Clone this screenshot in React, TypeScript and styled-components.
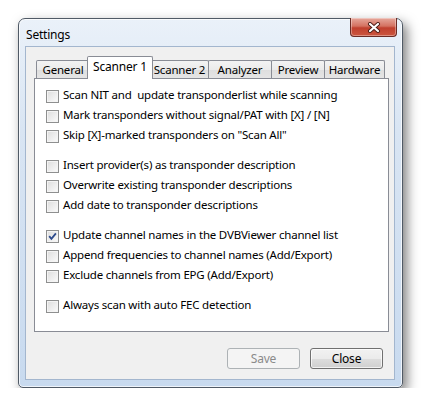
import React from 'react';
import styled, { createGlobalStyle } from 'styled-components';

const GlobalStyle = createGlobalStyle`
  html, body {
    margin: 0;
    padding: 0;
    background: #ffffff;
  }
  body {
    font-family: 'Noto Sans', 'Open Sans', sans-serif;
    font-size: 11.5px;
    letter-spacing: -0.2px;
    color: #000000;
  }
`;

const Desktop = styled.div`
  padding: 18px 0 0 18px;
`;

const Window = styled.div`
  box-sizing: border-box;
  width: 385px;
  height: 370px;
  display: flex;
  flex-direction: column;
  padding: 0 7px 7px 6px;
  border: 1px solid #505a66;
  border-radius: 7px 7px 5px 5px;
  background: linear-gradient(180deg, #eaf1f9 0%, #d9e5f3 30%, #c8daef 100%);
  box-shadow: inset 0 0 0 1px rgba(255, 255, 255, 0.7), 4px 5px 12px rgba(0, 0, 0, 0.5);
`;

const TitleBar = styled.div`
  height: 27px;
  display: flex;
  align-items: flex-start;
`;

const Title = styled.span`
  margin: 7px 0 0 1px;
  font-size: 12px;
  letter-spacing: -0.2px;
  color: #000000;
`;

const CloseBox = styled.div`
  margin: -1px -2px 0 auto;
  width: 47px;
  height: 19px;
  box-sizing: border-box;
  display: flex;
  align-items: center;
  justify-content: center;
  border: 1px solid #6a2b25;
  border-top: none;
  border-radius: 0 0 4px 4px;
  background: linear-gradient(180deg, #e6a89c 0%, #d47261 45%, #c0402e 55%, #cc563f 100%);
  box-shadow: inset 0 0 0 1px rgba(255, 255, 255, 0.35);
`;

const Client = styled.div`
  flex: 1;
  box-sizing: border-box;
  display: flex;
  flex-direction: column;
  padding: 9px 5px 0 8px;
  border: 1px solid #a3b6ce;
  background: #f0f0f0;
`;

const TabStrip = styled.div`
  height: 22px;
  display: flex;
  align-items: flex-end;
  padding-left: 2px;
`;

const Tab = styled.div<{ $w: number; $active?: boolean }>`
  box-sizing: border-box;
  flex-shrink: 0;
  width: ${p => (p.$active ? p.$w + 4 : p.$w)}px;
  height: ${p => (p.$active ? 23 : 18)}px;
  display: flex;
  align-items: center;
  justify-content: center;
  padding-bottom: ${p => (p.$active ? 3 : 0)}px;
  margin-left: ${p => (p.$active ? -3 : -1)}px;
  margin-right: ${p => (p.$active ? -2 : 0)}px;
  margin-bottom: ${p => (p.$active ? -1 : 0)}px;
  position: relative;
  z-index: ${p => (p.$active ? 2 : 1)};
  border: 1px solid #898c95;
  border-bottom: none;
  border-radius: 2px 2px 0 0;
  background: ${p =>
    p.$active ? '#ffffff' : 'linear-gradient(180deg, #f3f3f3 0%, #ebebeb 50%, #dedede 51%, #e5e5e5 100%)'};
  font-size: ${p => (p.$active ? 12 : 11.5)}px;
  white-space: nowrap;

  &:first-child {
    margin-left: 0;
  }
`;

const Panel = styled.div`
  box-sizing: border-box;
  height: 254px;
  position: relative;
  z-index: 1;
  padding: 7px 0 0 11px;
  border: 1px solid #898c95;
  background: #ffffff;
  display: flex;
  flex-direction: column;
  gap: 10px;
`;

const Group = styled.div`
  display: flex;
  flex-direction: column;
`;

const Row = styled.label`
  height: 20px;
  display: flex;
  align-items: flex-start;
  gap: 4px;
`;

const Label = styled.span`
  line-height: 18px;
  white-space: pre;
`;

const Box = styled.span`
  box-sizing: border-box;
  width: 13px;
  height: 13px;
  margin-top: 4px;
  flex-shrink: 0;
  position: relative;
  border: 1px solid #8e8f8f;
  background: linear-gradient(135deg, #dcdcdc 0%, #efefef 60%, #fbfbfb 100%);
  box-shadow: inset 0 0 0 1px #f4f4f4;

  svg {
    position: absolute;
    left: -1px;
    top: -1px;
  }
`;

const ButtonRow = styled.div`
  margin-top: 16px;
  padding-right: 6px;
  display: flex;
  justify-content: flex-end;
  gap: 10px;
`;

const Button = styled.button<{ $disabled?: boolean }>`
  box-sizing: border-box;
  width: 73px;
  height: 21px;
  padding: 0;
  font-family: 'Noto Sans', 'Open Sans', sans-serif;
  font-size: 12px;
  letter-spacing: -0.2px;
  border-radius: 3px;
  border: 1px solid ${p => (p.$disabled ? '#adb2b5' : '#707070')};
  color: ${p => (p.$disabled ? '#8a8a8a' : '#000000')};
  background: ${p =>
    p.$disabled ? '#f4f4f4' : 'linear-gradient(180deg, #f2f2f2 0%, #ebebeb 50%, #dddddd 51%, #cfcfcf 100%)'};
  box-shadow: ${p => (p.$disabled ? 'none' : 'inset 0 0 0 1px rgba(255, 255, 255, 0.7)')};
`;

const CheckMark = () => (
  <svg width="13" height="13" viewBox="0 0 13 13">
    <path d="M3.2 6.2 L5.4 8.8 L9.9 3.4" fill="none" stroke="#2c4a8c" strokeWidth="1.8" />
  </svg>
);

const CloseGlyph = () => (
  <svg width="14" height="11" viewBox="0 0 14 11">
    <path d="M3 2 L11 9 M11 2 L3 9" stroke="#4a1c16" strokeWidth="4" strokeLinecap="round" />
    <path d="M3 2 L11 9 M11 2 L3 9" stroke="#ffffff" strokeWidth="2.2" strokeLinecap="round" />
  </svg>
);

const Check: React.FC<{ label: string; checked?: boolean }> = ({ label, checked }) => (
  <Row>
    <Box>{checked && <CheckMark />}</Box>
    <Label>{label}</Label>
  </Row>
);

const tabs = [
  { name: 'General', w: 54 },
  { name: 'Scanner 1', w: 62, active: true },
  { name: 'Scanner 2', w: 59 },
  { name: 'Analyzer', w: 64 },
  { name: 'Preview', w: 54 },
  { name: 'Hardware', w: 61 },
];

const groups: { label: string; checked?: boolean }[][] = [
  [
    { label: 'Scan NIT and  update transponderlist while scanning' },
    { label: 'Mark transponders without signal/PAT with [X] / [N]' },
    { label: 'Skip [X]-marked transponders on "Scan All"' },
  ],
  [
    { label: 'Insert provider(s) as transponder description' },
    { label: 'Overwrite existing transponder descriptions' },
    { label: 'Add date to transponder descriptions' },
  ],
  [
    { label: 'Update channel names in the DVBViewer channel list', checked: true },
    { label: 'Append frequencies to channel names (Add/Export)' },
    { label: 'Exclude channels from EPG (Add/Export)' },
  ],
  [{ label: 'Always scan with auto FEC detection' }],
];

export default function App() {
  return (
    <Desktop>
      <GlobalStyle />
      <Window>
        <TitleBar>
          <Title>Settings</Title>
          <CloseBox>
            <CloseGlyph />
          </CloseBox>
        </TitleBar>
        <Client>
          <TabStrip>
            {tabs.map(t => (
              <Tab key={t.name} $w={t.w} $active={t.active}>
                {t.name}
              </Tab>
            ))}
          </TabStrip>
          <Panel>
            {groups.map((g, i) => (
              <Group key={i}>
                {g.map(item => (
                  <Check key={item.label} label={item.label} checked={item.checked} />
                ))}
              </Group>
            ))}
          </Panel>
          <ButtonRow>
            <Button $disabled disabled>
              Save
            </Button>
            <Button>Close</Button>
          </ButtonRow>
        </Client>
      </Window>
    </Desktop>
  );
}
